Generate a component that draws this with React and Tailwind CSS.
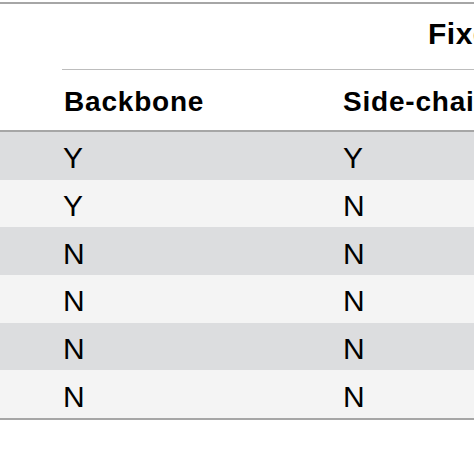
const rows = [
  ["Y", "Y"],
  ["Y", "N"],
  ["N", "N"],
  ["N", "N"],
  ["N", "N"],
  ["N", "N"],
];

export default function App() {
  return (
    <div
      className="h-[474px] w-[474px] overflow-hidden bg-white pt-[2px] text-black"
      style={{ fontFamily: '"Liberation Sans", Arial, Helvetica, sans-serif' }}
    >
      <div className="border-t-2 border-[#a6a6a6]">
        <div className="flex h-[65px] items-center pb-[5px] pl-[428px]">
          <span className="whitespace-nowrap text-[30px] font-bold leading-none tracking-[0.5px]">
            Fixed
          </span>
        </div>
        <div className="ml-[62px] border-t border-[#bdbdbd]" />
        <div className="grid h-[60px] grid-cols-[279px_1fr] items-center pl-[64px] pt-[3px]">
          <span className="whitespace-nowrap text-[28px] font-bold leading-none tracking-[0.8px]">
            Backbone
          </span>
          <span className="whitespace-nowrap text-[28px] font-bold leading-none tracking-[0.8px]">
            Side-chain
          </span>
        </div>
        <div className="border-b-2 border-t-2 border-b-[#a6a6a6] border-t-[#a6a6a6]">
          {rows.map((r, i) => (
            <div
              key={i}
              className={`grid h-[47.7px] grid-cols-[280px_1fr] items-center pl-[63px] pt-[5px] ${
                i % 2 === 0 ? "bg-[#dcdddf]" : "bg-[#f4f4f4]"
              }`}
            >
              <span className="text-[30px] leading-none">{r[0]}</span>
              <span className="text-[30px] leading-none">{r[1]}</span>
            </div>
          ))}
        </div>
      </div>
    </div>
  );
}
